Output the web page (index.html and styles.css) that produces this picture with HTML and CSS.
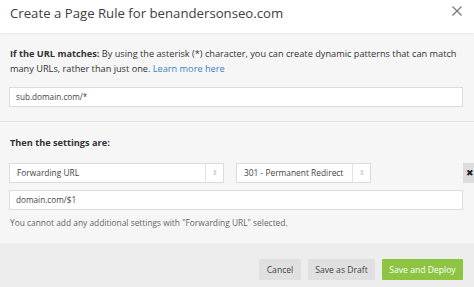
FILE: index.html
```html
<!DOCTYPE html>
<html lang="en">
<head>
    <meta charset="UTF-8">
    <title>Create a Page Rule</title>
    <link rel="stylesheet" href="styles.css">
</head>
<body>
    <div class="modal">
        <header class="modal-header">
            <h1>Create a Page Rule for benandersonseo.com</h1>
            <svg class="close" width="10" height="10" viewBox="0 0 10 10">
                <path d="M0.5 0.5 L9.5 9.5 M9.5 0.5 L0.5 9.5" stroke="#777" stroke-width="1.2" fill="none"/>
            </svg>
        </header>

        <!-- URL match -->
        <section class="section">
            <p class="intro"><b>If the URL matches:</b> By using the asterisk (*) character, you can create dynamic patterns that can match many URLs, rather than just one. <a href="#">Learn more here</a></p>
            <div class="field">sub.domain.com/*</div>
        </section>

        <!-- Settings -->
        <section class="section settings">
            <p class="label"><b>Then the settings are:</b></p>
            <div class="row">
                <div class="select wide"><span>Forwarding URL</span><i class="arrow">&#8661;</i></div>
                <div class="select narrow"><span>301 - Permanent Redirect</span><i class="arrow">&#8661;</i></div>
                <div class="remove">&#10006;</div>
            </div>
            <div class="field">domain.com/$1</div>
            <p class="help">You cannot add any additional settings with "Forwarding URL" selected.</p>
        </section>

        <footer class="modal-footer">
            <button class="btn">Cancel</button>
            <button class="btn">Save as Draft</button>
            <button class="btn btn-green">Save and Deploy</button>
        </footer>
    </div>
</body>
</html>
```
FILE: styles.css
```css
body {
    margin: 0;
    font-family: 'Open Sans', sans-serif;
    color: #333;
    background: #fff;
    overflow: hidden;
}
.modal {
    width: 474px;
    height: 287px;
    background: #f6f6f6;
}
.modal-header {
    height: 33px;
    background: #fff;
    display: flex;
    align-items: center;
    justify-content: space-between;
    padding: 0 12px 0 10px;
    box-sizing: border-box;
    box-shadow: 0 1px 3px rgba(0, 0, 0, 0.06);
    position: relative;
}
.modal-header h1 {
    margin: 0;
    font-size: 13.2px;
    font-weight: 400;
    color: #404040;
    margin-top: -7px;
    white-space: nowrap;
}
.close {
    margin-top: -12px;
}
.section {
    padding: 13px 11px 14px 9px;
    border-bottom: 1px solid #e3e3e3;
}
.intro {
    margin: 0 0 11px 1px;
    font-size: 9.2px;
    line-height: 15px;
}
.intro b, .label b {
    font-weight: 700;
}
.intro a {
    color: #3a83c4;
    text-decoration: none;
}
.field {
    height: 20px;
    background: #fff;
    border: 1px solid #dcdcdc;
    box-sizing: border-box;
    font-size: 8.2px;
    line-height: 18px;
    padding-left: 6px;
    color: #444;
}
.settings {
    border-bottom: none;
    padding-top: 14px;
    padding-bottom: 12px;
    height: 121px;
    box-sizing: border-box;
}
.label {
    margin: 0 0 14px 1px;
    font-size: 9.2px;
}
.row {
    display: flex;
    align-items: center;
    margin-bottom: 7px;
}
.select {
    height: 20px;
    background: #fff;
    border: 1px solid #dcdcdc;
    box-sizing: border-box;
    display: flex;
    font-size: 8.4px;
    line-height: 18px;
    color: #444;
    white-space: nowrap;
}
.select span {
    flex: 1;
    padding-left: 7px;
}
.select .arrow {
    width: 17px;
    border-left: 1px solid #e3e3e3;
    font-style: normal;
    text-align: center;
    color: #bbb;
    font-size: 7px;
}
.wide {
    width: 215px;
}
.narrow {
    width: 135px;
    margin-left: 12px;
}
.remove {
    margin-left: auto;
    margin-right: -11px;
    width: 11px;
    height: 20px;
    background: #ddd;
    font-size: 9px;
    line-height: 20px;
    color: #222;
    padding-left: 3px;
    box-sizing: border-box;
    overflow: hidden;
}
.help {
    margin: 7px 0 0 1px;
    font-size: 8.4px;
    color: #666;
}
.modal-footer {
    background: #ededed;
    height: 44px;
    display: flex;
    justify-content: flex-end;
    align-items: flex-start;
    padding: 16px 11px 0 0;
    box-sizing: border-box;
    gap: 7px;
}
.btn {
    font-family: 'Open Sans', sans-serif;
    font-size: 8.6px;
    height: 21px;
    border: none;
    border-radius: 1px;
    background: #e0e0e0;
    color: #444;
    padding: 0;
    white-space: nowrap;
    cursor: pointer;
}
.btn:nth-child(1) {
    width: 42px;
}
.btn:nth-child(2) {
    width: 67px;
}
.btn-green {
    width: 81px;
    background: #8dc542;
    color: #fff;
}
```
